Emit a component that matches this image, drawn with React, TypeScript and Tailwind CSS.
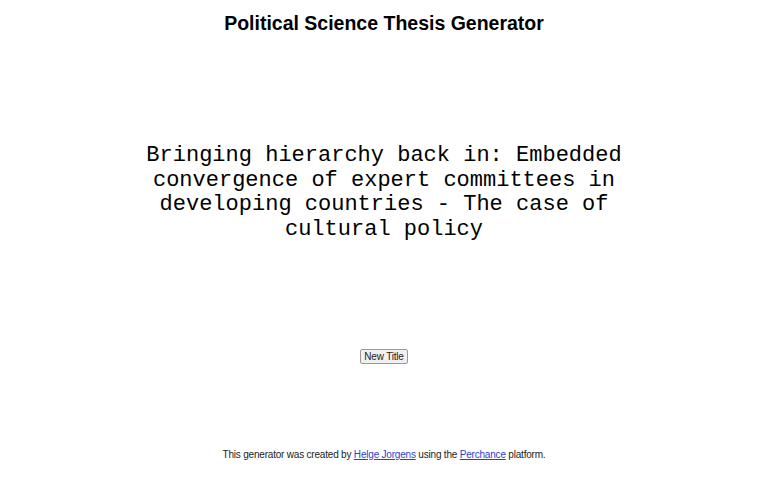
import React, { useState } from "react";

const titles = [
  "Bringing hierarchy back in: Embedded convergence of expert committees in developing countries - The case of cultural policy",
];

const App: React.FC = () => {
  const [title, setTitle] = useState(titles[0]);

  return (
    <div className="min-h-screen bg-white text-black flex flex-col items-center font-['Liberation_Sans',Arial,sans-serif]">
      {/* Page heading */}
      <h1 className="mt-[12px] text-[19.5px] leading-[23px] font-bold">
        Political Science Thesis Generator
      </h1>

      {/* Generated thesis title */}
      <div className="mt-[109px] h-[190px] w-[520px] text-center text-[22px] leading-[24.6px] font-['Liberation_Mono','Courier_New',monospace]">
        {title}
      </div>

      <button
        onClick={() => setTitle(titles[0])}
        className="mt-[15px] px-[3px] h-[15px] text-[10px] leading-[13px] tracking-[-0.2px] text-[#222] bg-[#f0f0f0] border border-[#999] rounded-[2px]"
      >
        New Title
      </button>

      {/* Footer credits */}
      <p className="mt-[84px] text-[10px] leading-[13px] tracking-[-0.2px] text-[#222]">
        This generator was created by{" "}
        <a href="#" className="text-[#2b3fcf] underline">
          Helge Jorgens
        </a>{" "}
        using the{" "}
        <a href="#" className="text-[#2b3fcf] underline">
          Perchance
        </a>{" "}
        platform.
      </p>
    </div>
  );
};

export default App;
